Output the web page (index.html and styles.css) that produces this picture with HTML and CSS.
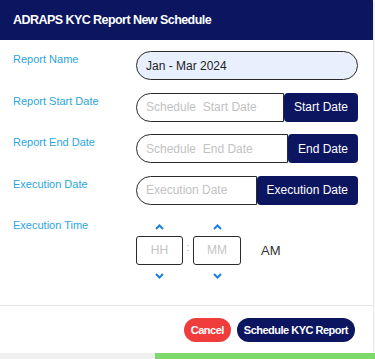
FILE: index.html
```html
<!DOCTYPE html>
<html lang="en">
  <head>
    <meta charset="UTF-8" />
    <meta name="viewport" content="width=device-width, initial-scale=1.0" />
    <title>ADRAPS KYC Report New Schedule</title>
    <link rel="stylesheet" href="styles.css">
  </head>
  <body>
    <div class="modal">
      <div class="modal-header">ADRAPS KYC Report New Schedule</div>
      <div class="modal-body">
        <div class="form-row">
          <label for="reportName">Report Name</label>
          <input type="text" id="reportName" class="field field-name" value="Jan - Mar 2024" />
        </div>

        <div class="form-row">
          <label for="startDate">Report Start Date</label>
          <div class="date-group">
            <input type="text" id="startDate" class="field" placeholder="Schedule  Start Date" />
            <button class="date-btn">Start Date</button>
          </div>
        </div>

        <div class="form-row">
          <label for="endDate">Report End Date</label>
          <div class="date-group">
            <input type="text" id="endDate" class="field" placeholder="Schedule  End Date" />
            <button class="date-btn">End Date</button>
          </div>
        </div>

        <div class="form-row">
          <label for="execDate">Execution Date</label>
          <div class="date-group">
            <input type="text" id="execDate" class="field" placeholder="Execution Date" />
            <button class="date-btn">Execution Date</button>
          </div>
        </div>

        <div class="form-row time-row">
          <label for="hours">Execution Time</label>
          <div class="time-picker">
            <div class="time-col">
              <span class="arrow">
                <svg width="9" height="6" viewBox="0 0 9 6"><path d="M1 5 L4.5 1.5 L8 5" fill="none" stroke="#1c7fe0" stroke-width="2" /></svg>
              </span>
              <input type="text" id="hours" class="time-box" placeholder="HH" />
              <span class="arrow arrow-down">
                <svg width="9" height="6" viewBox="0 0 9 6"><path d="M1 1 L4.5 4.5 L8 1" fill="none" stroke="#1c7fe0" stroke-width="2" /></svg>
              </span>
            </div>
            <div class="time-sep">:</div>
            <div class="time-col">
              <span class="arrow">
                <svg width="9" height="6" viewBox="0 0 9 6"><path d="M1 5 L4.5 1.5 L8 5" fill="none" stroke="#1c7fe0" stroke-width="2" /></svg>
              </span>
              <input type="text" id="minutes" class="time-box" placeholder="MM" />
              <span class="arrow arrow-down">
                <svg width="9" height="6" viewBox="0 0 9 6"><path d="M1 1 L4.5 4.5 L8 1" fill="none" stroke="#1c7fe0" stroke-width="2" /></svg>
              </span>
            </div>
            <div class="meridian">AM</div>
          </div>
        </div>
      </div>
      <div class="modal-footer">
        <button class="btn btn-cancel">Cancel</button>
        <button class="btn btn-submit">Schedule KYC Report</button>
      </div>
    </div>
    <div class="page-strip">
      <div class="strip-grey"></div>
      <div class="strip-green"></div>
    </div>
  </body>
</html>
```

FILE: styles.css
```css
* {
  box-sizing: border-box;
}
body {
  margin: 0;
  background: #fff;
  font-family: "Liberation Sans", Arial, sans-serif;
  overflow: hidden;
}
.modal {
  width: 373px;
  background: #fff;
  box-shadow: 0 1px 4px rgba(0, 0, 0, 0.18);
}
.modal-header {
  height: 40px;
  display: flex;
  align-items: center;
  padding-left: 13px;
  background: #0b1560;
  color: #fff;
  font-size: 12.5px;
  font-weight: bold;
  letter-spacing: -0.55px;
}
.modal-body {
  display: flex;
  flex-direction: column;
  gap: 12.5px;
  padding: 11px 15px 24px 13px;
}
.form-row {
  display: grid;
  grid-template-columns: 123px 1fr;
  height: 29px;
}
.form-row label {
  padding-top: 2px;
  color: #2ba5dd;
  font-size: 11px;
}
.field {
  height: 29px;
  width: 100%;
  padding: 0 9px;
  border: 1px solid #2a2a2a;
  border-radius: 15px 0 0 15px;
  background: #fff;
  color: #222;
  font-family: inherit;
  font-size: 12px;
  outline: none;
}
.field::placeholder {
  color: #c2c2c2;
}
.field-name {
  border-radius: 15px;
  background: #e8f0fe;
}
.date-group {
  display: flex;
}
.date-group .field {
  flex: 1;
  min-width: 0;
}
.date-btn {
  height: 29px;
  padding: 0 10px;
  border: none;
  border-radius: 4px;
  background: #0b1560;
  color: #fff;
  font-family: inherit;
  font-size: 12px;
  white-space: nowrap;
}
.time-row {
  height: auto;
}
.time-picker {
  display: flex;
  align-items: flex-start;
}
.time-col {
  display: flex;
  flex-direction: column;
  align-items: center;
}
.arrow {
  display: flex;
  height: 18.5px;
  padding-top: 7px;
}
.arrow-down {
  height: 16px;
  padding-top: 8px;
}
.time-box {
  width: 47px;
  height: 29px;
  border: 1px solid #2a2a2a;
  border-radius: 3px;
  text-align: center;
  font-family: inherit;
  font-size: 12px;
  outline: none;
}
.time-col + .time-sep + .time-col .time-box {
  width: 48px;
}
.time-box::placeholder {
  color: #c4c4c4;
}
.time-sep {
  width: 10px;
  margin-top: 25px;
  text-align: center;
  color: #aaa;
  font-size: 10px;
}
.meridian {
  margin-top: 26px;
  margin-left: 20px;
  color: #333;
  font-size: 13px;
}
.modal-footer {
  display: flex;
  justify-content: flex-end;
  gap: 6px;
  padding: 12px 18px 11px;
  border-top: 1px solid #e6e6e6;
}
.btn {
  height: 24px;
  padding: 0 7px;
  border: none;
  border-radius: 12px;
  color: #fff;
  font-family: inherit;
  font-size: 11px;
  font-weight: bold;
  letter-spacing: -0.5px;
}
.btn-cancel {
  background: #f03c3a;
}
.btn-submit {
  background: #0b1560;
}
.page-strip {
  display: flex;
  height: 6px;
}
.strip-grey {
  width: 155px;
  background: #f0f0f0;
}
.strip-green {
  flex: 1;
  background: #7ed96c;
}
```
